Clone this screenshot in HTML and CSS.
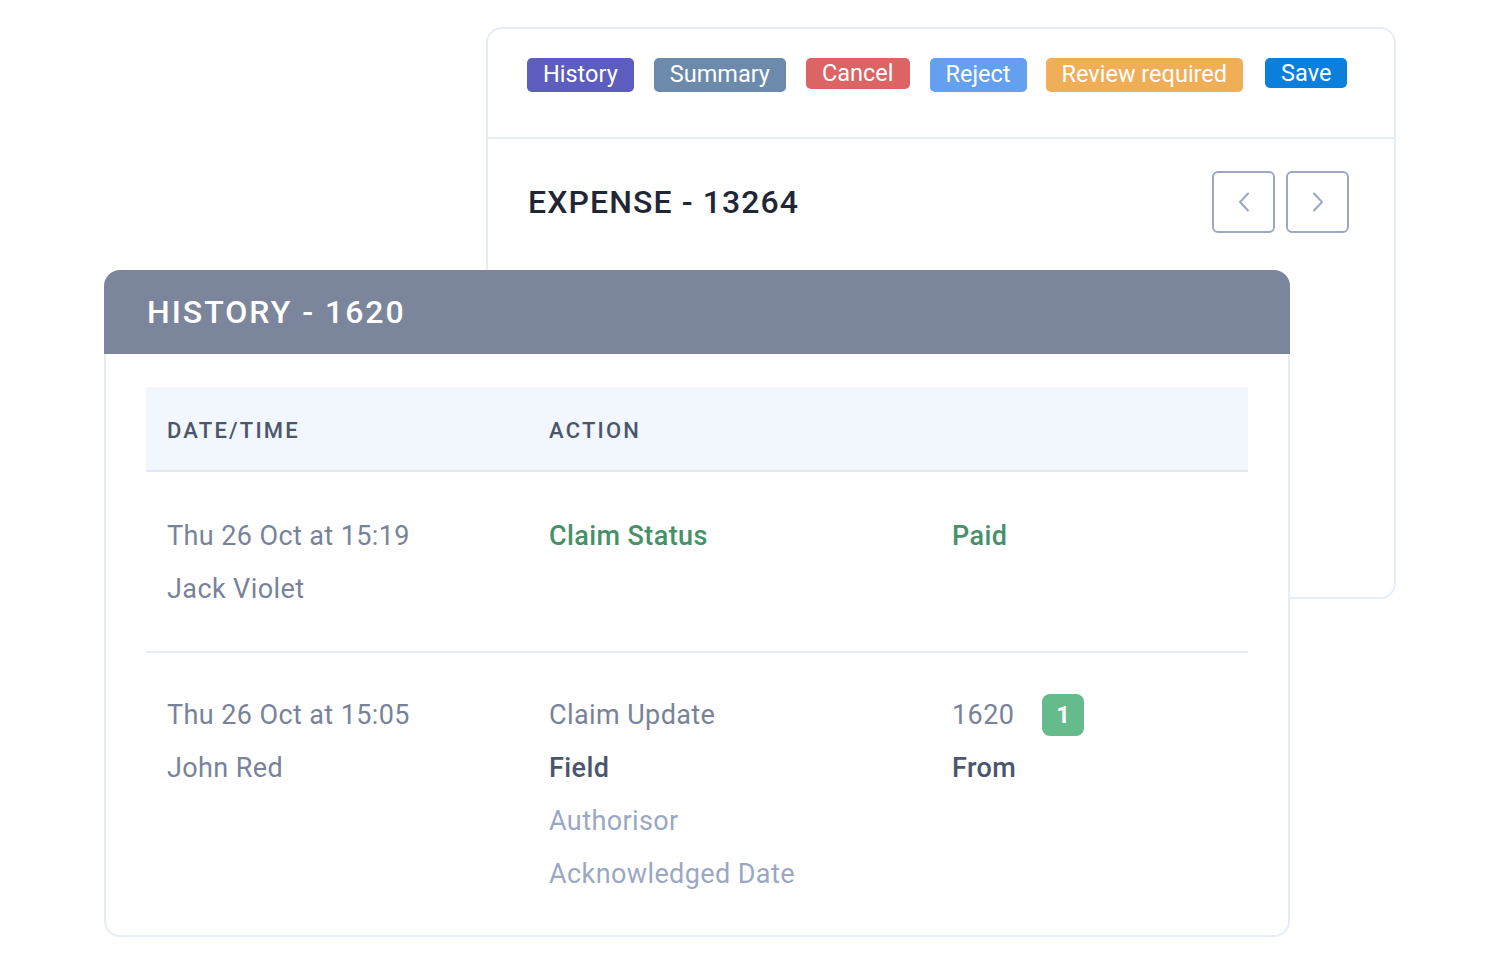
FILE: index.html
```html
<!DOCTYPE html>
<html lang="en">
<head>
	<meta charset="UTF-8">
	<title>Expense history</title>
	<link rel="stylesheet" href="styles.css">
</head>
<body>
	<div class="stage">
		<!-- 后面的报销单卡片 -->
		<div class="expense">
			<div class="expense-actions">
				<a class="btn btn-history" href="#">History</a>
				<a class="btn btn-summary" href="#">Summary</a>
				<a class="btn btn-cancel" href="#">Cancel</a>
				<a class="btn btn-reject" href="#">Reject</a>
				<a class="btn btn-review" href="#">Review required</a>
				<a class="btn btn-save" href="#">Save</a>
			</div>
			<div class="expense-head">
				<h1 class="expense-title">EXPENSE - 13264</h1>
				<div class="pager">
					<a class="pager-btn" href="#" title="Previous">
						<svg width="14" height="20" viewBox="0 0 14 20"><path d="M11 1.5 L3 10 L11 18.5" fill="none" stroke="#9aa8c4" stroke-width="2" stroke-linecap="round" stroke-linejoin="round"/></svg>
					</a>
					<a class="pager-btn" href="#" title="Next">
						<svg width="14" height="20" viewBox="0 0 14 20"><path d="M3 1.5 L11 10 L3 18.5" fill="none" stroke="#9aa8c4" stroke-width="2" stroke-linecap="round" stroke-linejoin="round"/></svg>
					</a>
				</div>
			</div>
		</div>

		<!-- 盖在上面的历史记录弹窗 -->
		<div class="history">
			<div class="history-head">HISTORY - 1620</div>
			<div class="history-body">
				<div class="hist-row hist-row-head">
					<div>DATE/TIME</div>
					<div>ACTION</div>
					<div></div>
				</div>
				<div class="hist-row">
					<div class="muted">
						<div>Thu 26 Oct at 15:19</div>
						<div>Jack Violet</div>
					</div>
					<div class="ok">Claim Status</div>
					<div class="ok">Paid</div>
				</div>
				<div class="hist-row">
					<div class="muted">
						<div>Thu 26 Oct at 15:05</div>
						<div>John Red</div>
					</div>
					<div>
						<div class="muted">Claim Update</div>
						<div class="strong">Field</div>
						<div class="faint">Authorisor</div>
						<div class="faint">Acknowledged Date</div>
					</div>
					<div>
						<div class="muted">1620 <span class="badge">1</span></div>
						<div class="strong">From</div>
					</div>
				</div>
			</div>
		</div>
	</div>
</body>
</html>
```

FILE: styles.css
```css
body {
	margin: 0;
	padding: 0;
	background-color: #fff;
	font-family: Roboto, "Liberation Sans", sans-serif;
}
a {
	text-decoration: none;
	outline: none;
}
h1 {
	margin: 0;
}

.stage {
	position: relative;
	height: 964px;
	padding: 27px 0 0 486px;
	box-sizing: border-box;
}

/*后面的卡片*/
.expense {
	width: 910px;
	height: 572px;
	box-sizing: border-box;
	border: 2px solid #e7edf8;
	border-radius: 16px;
}
.expense-actions {
	display: flex;
	align-items: flex-start;
	gap: 20px;
	height: 110px;
	box-sizing: border-box;
	padding: 29px 0 0 39px;
	border-bottom: 2px solid #e7edf8;
}
.btn {
	display: block;
	height: 34px;
	line-height: 33px;
	padding: 0 16px;
	border-radius: 5px;
	color: #fff;
	font-size: 23.5px;
	font-weight: 400;
}
.btn-history { background-color: #5d5cbf; }
.btn-summary { background-color: #6c8aac; }
.btn-cancel  { background-color: #dc6464; height: 31px; line-height: 31px; }
.btn-reject  { background-color: #64a0f0; }
.btn-review  { background-color: #f0ae56; }
.btn-save    { background-color: #0a80dc; height: 30px; line-height: 30px; }
.btn-review { margin-left: -1px; }
.btn-save { margin-left: 2px; }

.expense-head {
	display: flex;
	align-items: center;
	justify-content: space-between;
	padding: 32px 45px 0 40px;
}
.expense-title {
	font-size: 32px;
	font-weight: 500;
	letter-spacing: 1.1px;
	color: #1f2736;
}
.pager {
	display: flex;
	gap: 11px;
}
.pager-btn {
	display: flex;
	align-items: center;
	justify-content: center;
	width: 63px;
	height: 62px;
	box-sizing: border-box;
	border: 2px solid #9aa8c4;
	border-radius: 6px;
}

/*历史记录弹窗，盖在卡片上*/
.history {
	position: absolute;
	left: 104px;
	top: 270px;
	width: 1186px;
}
.history-head {
	height: 84px;
	line-height: 84px;
	padding-left: 43px;
	background-color: #7b869c;
	border-radius: 16px 16px 0 0;
	color: #fff;
	font-size: 32px;
	font-weight: 500;
	letter-spacing: 2px;
}
.history-body {
	height: 583px;
	box-sizing: border-box;
	padding: 33px 40px 0 40px;
	background-color: #fff;
	border: 2px solid #e7edf8;
	border-top: none;
	border-radius: 0 0 16px 16px;
}

.hist-row {
	display: grid;
	grid-template-columns: 382px 403px 1fr;
	padding: 38px 21px 35px;
	border-bottom: 2px solid #e7edf8;
	font-size: 27px;
	letter-spacing: 0.4px;
	line-height: 53px;
}
.hist-row:last-child {
	border-bottom: none;
	padding-top: 36px;
}
.hist-row-head {
	padding-top: 0;
	padding-bottom: 0;
	height: 83px;
	line-height: 87px;
	background-color: #f2f6fd;
	border-bottom-color: #e2e9f5;
	color: #4b566b;
	font-size: 22px;
	font-weight: 500;
	letter-spacing: 2.2px;
}

.muted  { color: #78839b; }
.strong { color: #4a5670; font-weight: 500; }
.faint  { color: #9aa8c4; }
.ok     { color: #46916a; font-weight: 500; }

.badge {
	display: inline-block;
	width: 42px;
	height: 42px;
	line-height: 42px;
	margin-left: 21px;
	border-radius: 8px;
	background-color: #66bb8c;
	color: #fff;
	font-size: 24px;
	font-weight: 700;
	text-align: center;
	vertical-align: middle;
	position: relative;
	top: -2px;
}
```
